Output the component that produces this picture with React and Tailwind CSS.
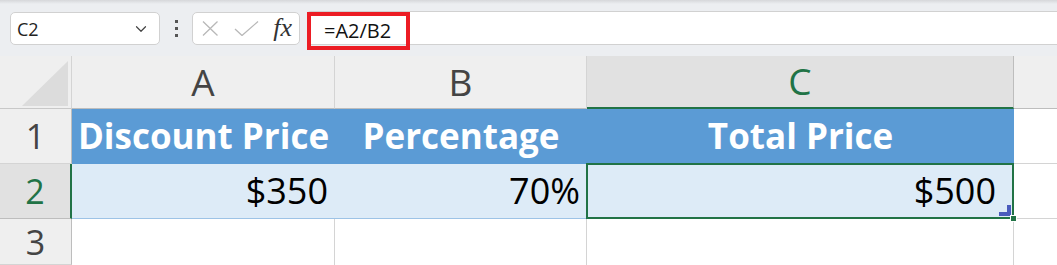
import { ChevronDown } from "lucide-react";

const font = { fontFamily: '"Open Sans", "Noto Sans", sans-serif' };

function FormulaBar() {
  return (
    <div className="relative h-[56px] bg-[#eceef1] flex items-start pt-[12px]">
      <div className="absolute inset-x-0 top-0 h-[4px] bg-gradient-to-b from-[#d6d7da] to-[#eceef1]" />
      {/* name box */}
      <div className="ml-[10px] w-[150px] h-[33px] rounded-[5px] border border-[#d1d1d1] bg-white flex items-center justify-between pl-[6px] pr-[9px]">
        <span className="text-[18px] text-[#222] leading-none">C2</span>
        <ChevronDown size={18} strokeWidth={1.6} className="text-[#444]" />
      </div>
      {/* splitter dots */}
      <div className="w-[32px] h-[33px] flex flex-col items-center justify-center gap-[4px]">
        <span className="w-[3px] h-[3px] bg-[#555]" />
        <span className="w-[3px] h-[3px] bg-[#555]" />
        <span className="w-[3px] h-[3px] bg-[#555]" />
      </div>
      {/* cancel / enter / fx */}
      <div className="w-[108px] h-[33px] rounded-[5px] border border-[#d1d1d1] bg-white flex items-center pl-[8px] pr-[7px]">
        <svg width="19" height="15" viewBox="0 0 19 15" className="shrink-0">
          <path d="M2 0.5 L16.5 14.5 M16.5 0.5 L2 14.5" stroke="#b8b8b8" strokeWidth="1.3" fill="none" />
        </svg>
        <svg width="25" height="15" viewBox="0 0 25 15" className="ml-[14px] shrink-0">
          <path d="M1 8 L8 14.5 L24 0.5" stroke="#b8b8b8" strokeWidth="1.3" fill="none" />
        </svg>
        <span
          className="ml-auto text-[26px] italic leading-none text-[#333] pb-[2px]"
          style={{ fontFamily: '"Liberation Serif", "DejaVu Serif", serif' }}
        >
          fx
        </span>
      </div>
      {/* formula input */}
      <div className="ml-[7px] flex-1 h-[34px] -mt-[1px] bg-white border-y border-l border-[#d1d1d1] rounded-l-[4px] flex items-start">
        <div className="h-[38px] w-[103px] border-[4px] border-[#ec1c24] flex items-center pl-[13px] -ml-px">
          <span className="text-[20px] text-[#111] leading-none">=A2/B2</span>
        </div>
      </div>
    </div>
  );
}

function Corner() {
  return (
    <div className="bg-[#efefef] border-r border-b border-r-[#d4d4d4] border-b-[#c8c8c8] flex items-end justify-end pr-[3px] pb-[2px]">
      <svg width="46" height="45" viewBox="0 0 46 45">
        <path d="M0 45 L46 45 L46 0 Z" fill="#dcdcdc" />
      </svg>
    </div>
  );
}

function ColHead({ label, active }) {
  return active ? (
    <div className="bg-[#e1e1e1] border-r border-r-[#bdbdbd] border-b-2 border-b-[#217346] flex items-center justify-center text-[37px] text-[#217346] leading-none pb-[2px]">
      {label}
    </div>
  ) : (
    <div className="bg-[#efefef] border-r border-b border-r-[#d4d4d4] border-b-[#bdbdbd] flex items-center justify-center text-[37px] text-[#444] leading-none pb-[2px]">
      {label}
    </div>
  );
}

function RowHead({ label, active }) {
  return active ? (
    <div className="bg-[#e1e1e1] border-r-2 border-b border-r-[#217346] border-b-[#bdbdbd] flex items-center justify-center text-[34px] text-[#217346] leading-none">
      {label}
    </div>
  ) : (
    <div className="bg-[#efefef] border-r border-b border-r-[#bdbdbd] border-b-[#d4d4d4] flex items-center justify-center text-[34px] text-[#444] leading-none">
      {label}
    </div>
  );
}

function Sheet() {
  return (
    <div className="grid grid-cols-[72px_263px_252px_427px_1fr] grid-rows-[53px_55px_55px_46px]">
      <Corner />
      <ColHead label="A" />
      <ColHead label="B" />
      <ColHead label="C" active />
      <div className="bg-[#efefef] border-b border-b-[#bdbdbd]" />

      <RowHead label="1" />
      <div className="bg-[#5b9bd5] flex items-center justify-center text-white font-bold text-[35px] leading-none whitespace-nowrap pb-[2px]">
        Discount Price
      </div>
      <div className="bg-[#5b9bd5] flex items-center justify-center text-white font-bold text-[35px] leading-none whitespace-nowrap pb-[2px]">
        Percentage
      </div>
      <div className="bg-[#5b9bd5] flex items-center justify-center text-white font-bold text-[35px] leading-none whitespace-nowrap pb-[2px]">
        Total Price
      </div>
      <div className="bg-white border-b border-b-[#d4d4d4]" />

      <RowHead label="2" active />
      <div className="bg-[#ddebf7] border-b border-b-[#9dc3e6] flex items-center justify-end pr-[7px] text-[36px] text-black leading-none">
        $350
      </div>
      <div className="bg-[#ddebf7] border-b border-b-[#9dc3e6] flex items-center justify-end pr-[7px] text-[36px] text-black leading-none">
        70%
      </div>
      <div className="relative -mt-px -ml-px bg-[#ddebf7] border-2 border-[#217346] flex items-center justify-end pr-[16px] text-[36px] text-black leading-none">
        $500
        <svg width="12" height="11" viewBox="0 0 12 11" className="absolute right-[1px] bottom-[1px]">
          <path d="M8 0 H12 V11 H0 V7 H8 Z" fill="#4a5bbd" />
        </svg>
        <span className="absolute -right-[5px] -bottom-[5px] w-[7px] h-[7px] bg-[#217346] border border-white" />
      </div>
      <div className="bg-white border-b border-b-[#d4d4d4]" />

      <RowHead label="3" />
      <div className="bg-white border-r border-r-[#d4d4d4]" />
      <div className="bg-white border-r border-r-[#d4d4d4]" />
      <div className="bg-white border-r border-r-[#d4d4d4]" />
      <div className="bg-white" />
    </div>
  );
}

export default function App() {
  return (
    <div className="w-[1057px] h-[265px] overflow-hidden bg-white" style={font}>
      <FormulaBar />
      <Sheet />
    </div>
  );
}
